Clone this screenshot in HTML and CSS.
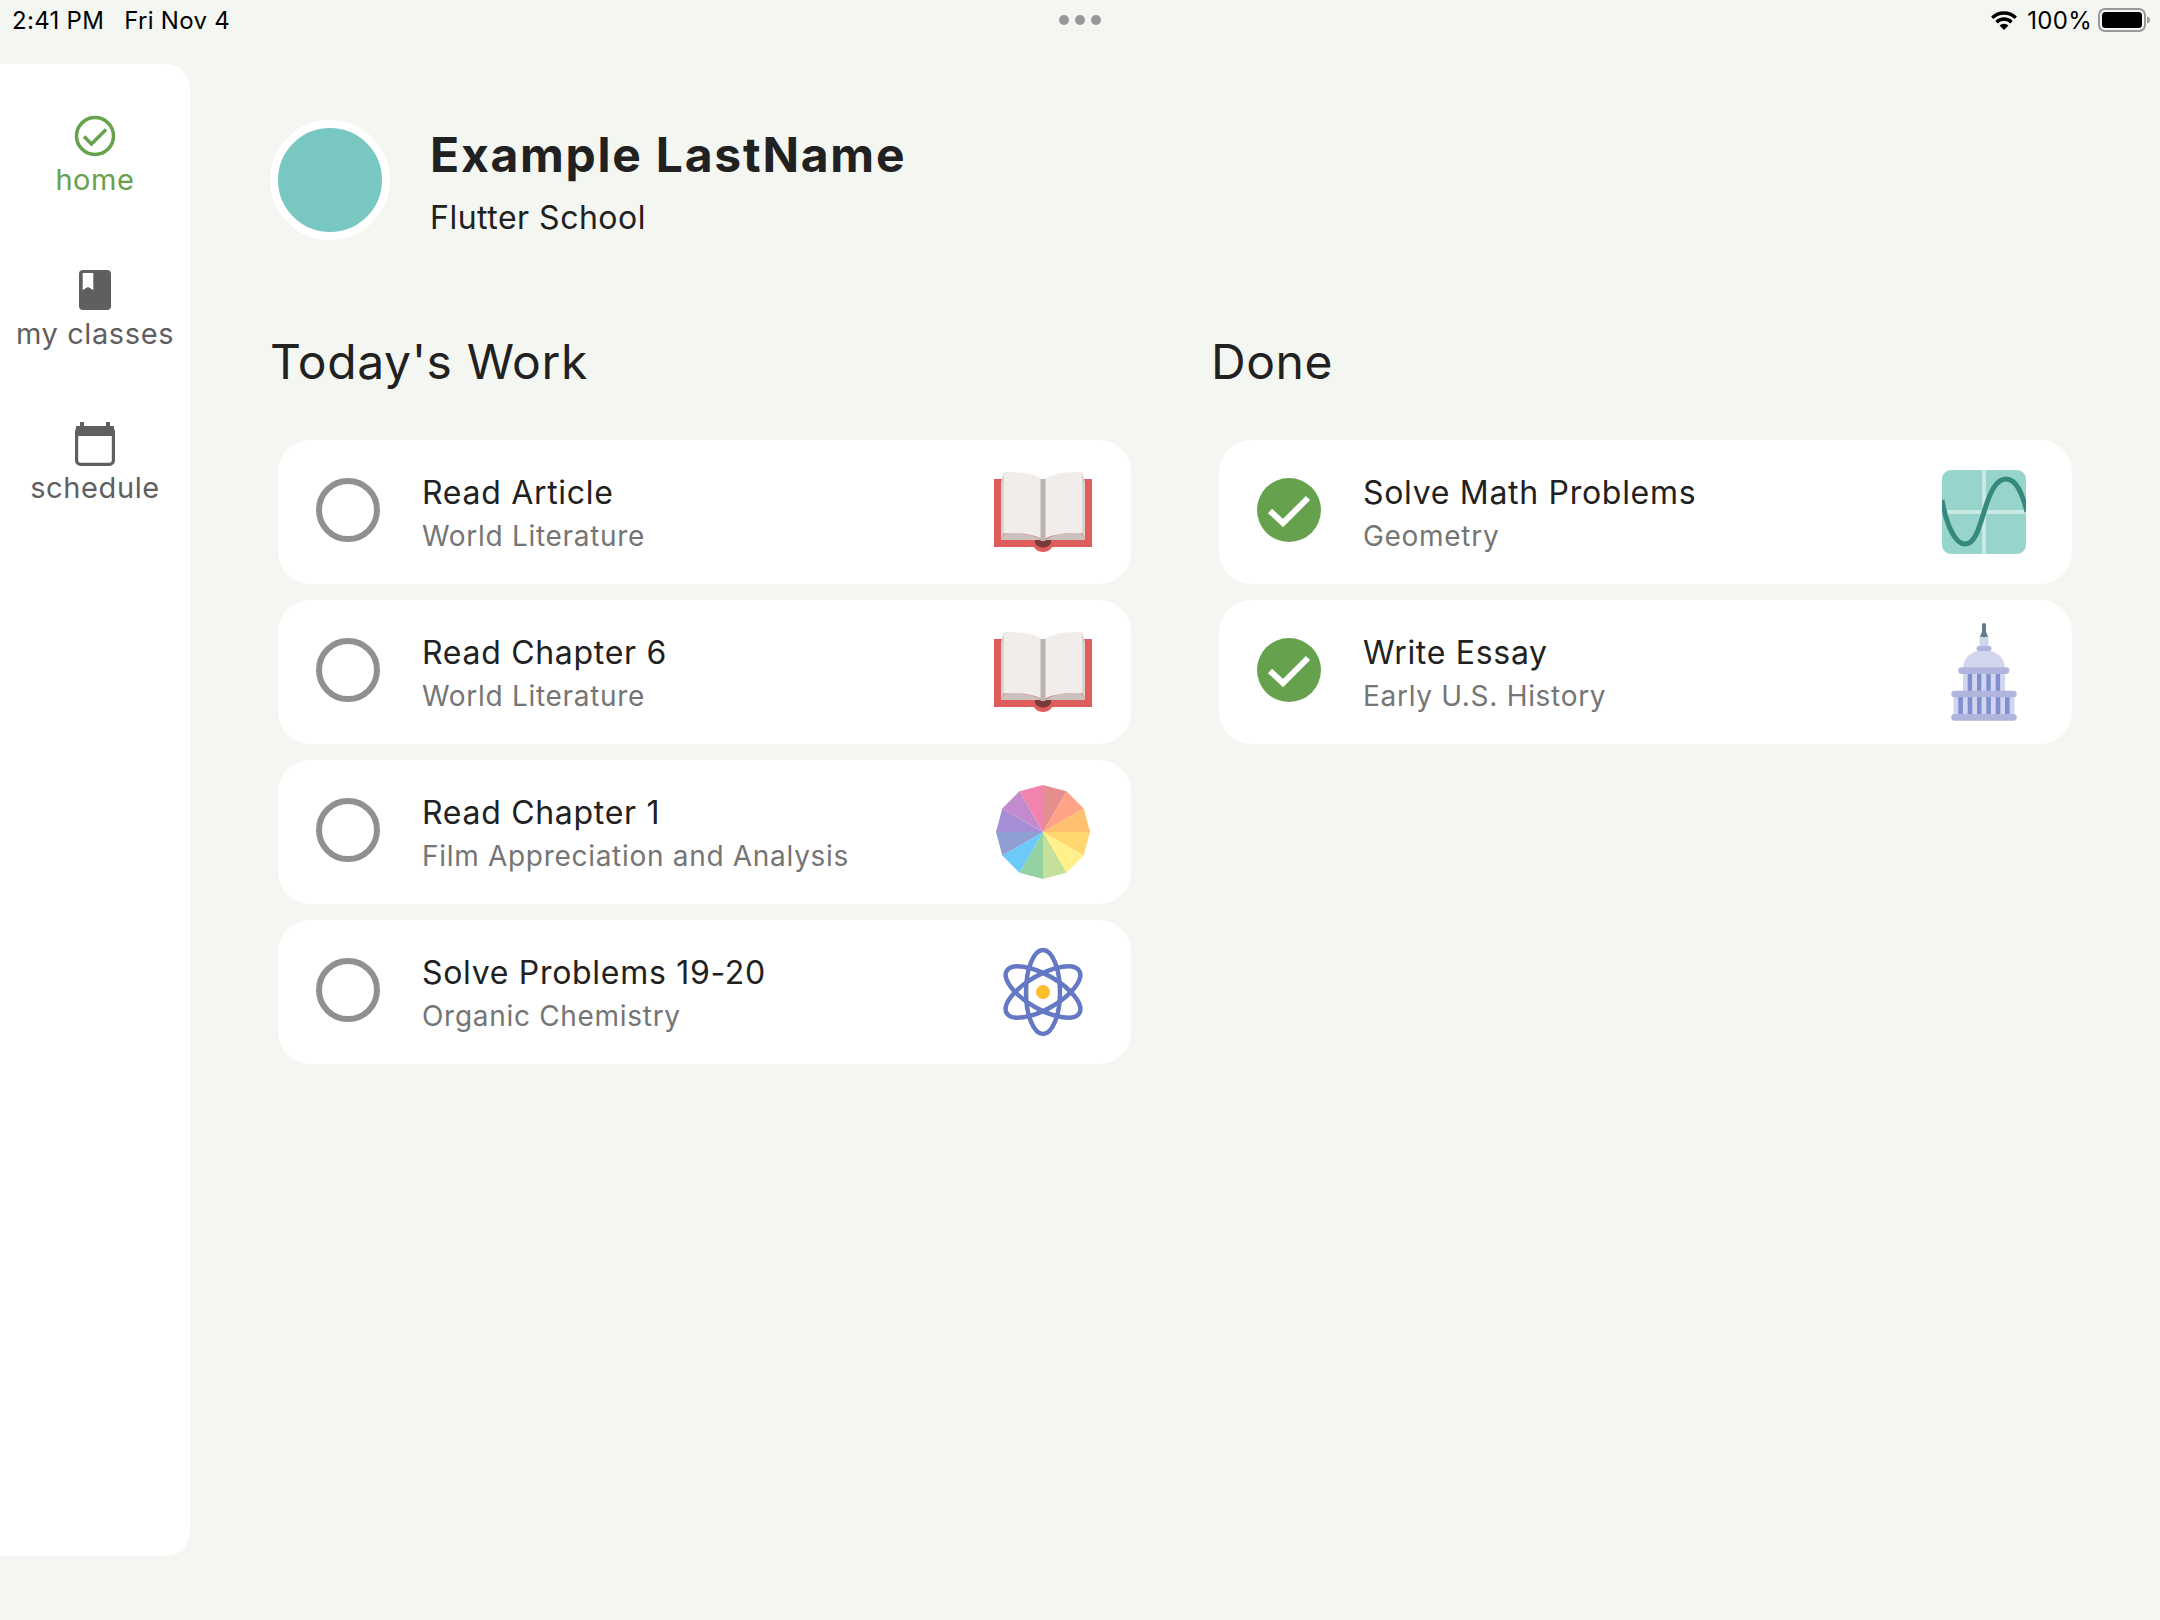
FILE: index.html
```html
<!DOCTYPE html>
<html lang="en">
<head>
    <meta charset="UTF-8">
    <meta name="viewport" content="width=device-width, initial-scale=1.0">
    <title>Flutter School</title>
    <link rel="stylesheet" href="styles.css">
</head>
<body>
    <svg class="defs" width="0" height="0">
        <symbol id="book" viewBox="0 0 100 100">
            <circle cx="50" cy="79" r="11" fill="#e05d5d"/>
            <rect x="1" y="17" width="98" height="68" fill="#e05d5d"/>
            <path d="M42 78h16v2c0 3-4 5.500-8 5.500s-8-2.500-8-5.500z" fill="#7a3a3a"/>
            <path d="M8 20l3-10v61l-3 6zM92 20l-3-10v61l3 6z" fill="#dad5d2"/>
            <path d="M8 77l4-6c16 0 29 1 36 7v0H8zM92 77l-4-6c-16 0-29 1-36 7v0h40z" fill="#cbc2bd"/>
            <path d="M11 10c16 0 30 1 37 7v60c-7-5-20-6-37-6zM89 10c-16 0-30 1-37 7v60c7-5 20-6 37-6z" fill="#f0edea"/>
            <rect x="47.500" y="17" width="5" height="62" fill="#bdb3ae"/>
        </symbol>
        <symbol id="done" viewBox="0 0 64 64">
            <circle cx="32" cy="32" r="32" fill="#66a14d"/>
            <path d="M13 33l13 12 25-25" fill="none" stroke="#fff" stroke-width="6"/>
        </symbol>
    </svg>

    <div class="status-bar">
        <div class="status-left"><span>2:41 PM</span><span>Fri Nov 4</span></div>
        <div class="status-dots"><i></i><i></i><i></i></div>
        <div class="status-right">
            <svg class="wifi" viewBox="0 0 26 20" width="26" height="20">
                <path d="M1.200 7.800a17 17 0 0 1 23.600 0" fill="none" stroke="#000" stroke-width="3.400"/>
                <path d="M5.500 12.200a10.500 10.500 0 0 1 15 0" fill="none" stroke="#000" stroke-width="3.400"/>
                <path d="M13 20l-4.500-4.500a6.500 6.500 0 0 1 9 0z" fill="#000"/>
            </svg>
            <span>100%</span>
            <svg class="battery" viewBox="0 0 52 24" width="52" height="24">
                <rect x="1" y="1" width="46" height="22" rx="6" fill="none" stroke="#999" stroke-width="2"/>
                <rect x="4" y="4" width="40" height="16" rx="3.500" fill="#000"/>
                <path d="M49 8.500c2 .5 3 2 3 3.500s-1 3-3 3.500z" fill="#999"/>
            </svg>
        </div>
    </div>

    <div class="layout">
        <nav class="sidebar">
            <a class="nav-item active">
                <svg viewBox="0 0 48 48" width="48" height="48">
                    <circle cx="24" cy="24" r="18.500" fill="none" stroke="#66a14d" stroke-width="3.500"/>
                    <path d="M13 24.500l7.500 7.500 14.500-14.500" fill="none" stroke="#66a14d" stroke-width="3.500"/>
                </svg>
                <span>home</span>
            </a>
            <a class="nav-item">
                <svg viewBox="0 0 48 48" width="48" height="48">
                    <rect x="8" y="4" width="32" height="40" rx="4" fill="#5f5f5f"/>
                    <path d="M11.700 7h10.600v17l-5.300-3-5.300 3z" fill="#fff"/>
                </svg>
                <span>my classes</span>
            </a>
            <a class="nav-item">
                <svg viewBox="0 0 48 48" width="48" height="48">
                    <rect x="9" y="2" width="4" height="6" fill="#5f5f5f"/>
                    <rect x="35" y="2" width="4" height="6" fill="#5f5f5f"/>
                    <rect x="5.600" y="7.600" width="36.800" height="36.800" rx="4" fill="none" stroke="#5f5f5f" stroke-width="3.200"/>
                    <rect x="5" y="6" width="38" height="10" fill="#5f5f5f"/>
                </svg>
                <span>schedule</span>
            </a>
        </nav>

        <main class="main">
            <header class="profile">
                <div class="avatar"></div>
                <div class="profile-text">
                    <h1>Example LastName</h1>
                    <p>Flutter School</p>
                </div>
            </header>

            <div class="columns">
                <section>
                    <h2>Today's Work</h2>
                    <ul class="task-list">
                        <li class="task">
                            <span class="radio"></span>
                            <div class="task-text"><strong>Read Article</strong><span>World Literature</span></div>
                            <svg class="task-icon" viewBox="0 0 100 100"><use href="#book"/></svg>
                        </li>
                        <li class="task">
                            <span class="radio"></span>
                            <div class="task-text"><strong>Read Chapter 6</strong><span>World Literature</span></div>
                            <svg class="task-icon" viewBox="0 0 100 100"><use href="#book"/></svg>
                        </li>
                        <li class="task">
                            <span class="radio"></span>
                            <div class="task-text"><strong>Read Chapter 1</strong><span>Film Appreciation and Analysis</span></div>
                            <svg class="task-icon" viewBox="0 0 100 100">
                                <path d="M50 50V3L73.500 9.300z" fill="#e58e8e"/>
                                <path d="M50 50L73.500 9.300 90.700 26.500z" fill="#ffa285"/>
                                <path d="M50 50L90.700 26.500 97 50z" fill="#ffbf6e"/>
                                <path d="M50 50H97L90.700 73.500z" fill="#ffd76f"/>
                                <path d="M50 50L90.700 73.500 73.500 90.700z" fill="#fff08a"/>
                                <path d="M50 50L73.500 90.700 50 97z" fill="#c5e09b"/>
                                <path d="M50 50V97L26.500 90.700z" fill="#94d1a0"/>
                                <path d="M50 50L26.500 90.700 9.300 73.500z" fill="#6dc9f7"/>
                                <path d="M50 50L9.300 73.500 3 50z" fill="#8f9fd4"/>
                                <path d="M50 50H3L9.300 26.500z" fill="#a68ed6"/>
                                <path d="M50 50L9.300 26.500 26.500 9.300z" fill="#c48ad0"/>
                                <path d="M50 50L26.500 9.300 50 3z" fill="#f283ae"/>
                            </svg>
                        </li>
                        <li class="task">
                            <span class="radio"></span>
                            <div class="task-text"><strong>Solve Problems 19-20</strong><span>Organic Chemistry</span></div>
                            <svg class="task-icon" viewBox="0 0 100 100">
                                <g fill="none" stroke="#6478c4" stroke-width="4.500">
                                    <ellipse cx="50" cy="50" rx="17" ry="42"/>
                                    <ellipse cx="50" cy="50" rx="17" ry="42" transform="rotate(60 50 50)"/>
                                    <ellipse cx="50" cy="50" rx="17" ry="42" transform="rotate(-60 50 50)"/>
                                </g>
                                <circle cx="50" cy="50" r="7" fill="#fdbd2d"/>
                            </svg>
                        </li>
                    </ul>
                </section>

                <section>
                    <h2>Done</h2>
                    <ul class="task-list">
                        <li class="task">
                            <svg class="check" viewBox="0 0 64 64"><use href="#done"/></svg>
                            <div class="task-text"><strong>Solve Math Problems</strong><span>Geometry</span></div>
                            <svg class="task-icon" viewBox="0 0 100 100">
                                <clipPath id="graph"><rect x="8" y="8" width="84" height="84" rx="9"/></clipPath>
                                <g clip-path="url(#graph)">
                                    <rect x="8" y="8" width="84" height="84" fill="#97d5cc"/>
                                    <path d="M50 8v84M8 50h84" stroke="#c9e9e3" stroke-width="4"/>
                                    <path d="M8 38C13 66 22 82 31 82C41 82 45 66 50 50C56 30 62 17 72 17C82 17 88 30 93 50" fill="none" stroke="#36897c" stroke-width="5"/>
                                </g>
                            </svg>
                        </li>
                        <li class="task">
                            <svg class="check" viewBox="0 0 64 64"><use href="#done"/></svg>
                            <div class="task-text"><strong>Write Essay</strong><span>Early U.S. History</span></div>
                            <svg class="task-icon" viewBox="0 0 100 100">
                                <path d="M48 3a2 2 0 0 1 4 0v7l2 5h-8l2-5z" fill="#607d8b"/>
                                <rect x="45.500" y="15" width="9" height="10" fill="#d1d5ee"/>
                                <path d="M29 46a21 18 0 0 1 42 0z" fill="#d1d5ee"/>
                                <rect x="29" y="52" width="42" height="17" fill="#d1d5ee"/>
                                <rect x="19.500" y="75" width="61" height="17" fill="#d1d5ee"/>
                                <path d="M33.700 52h4.400v17h-4.400zM43 52h4.400v17H43zM52.300 52h4.400v17h-4.400zM61.700 52h4.400v17h-4.400zM24.300 75h4.600v17h-4.600zM33.700 75h4.600v17h-4.600zM43 75h4.600v17H43zM52.300 75h4.600v17h-4.600zM61.700 75h4.600v17h-4.600zM71 75h4.600v17H71z" fill="#7f8fd0"/>
                                <g fill="#b0b5de">
                                    <rect x="42.500" y="24" width="15" height="5" rx="2.500"/>
                                    <rect x="24.300" y="45.300" width="51" height="6.700" rx="3.300"/>
                                    <rect x="17.300" y="68.700" width="65.400" height="6.600" rx="3.300"/>
                                    <rect x="17.300" y="92" width="65.400" height="6.700" rx="3.300"/>
                                </g>
                            </svg>
                        </li>
                    </ul>
                </section>
            </div>
        </main>
    </div>
</body>
</html>
```

FILE: styles.css
```css
* {
    box-sizing: border-box;
}
body {
    margin: 0;
    height: 1620px;
    overflow: hidden;
    background-color: #f4f6f1;
    color: #212121;
    font-family: Inter, "Open Sans", sans-serif;
}
.defs {
    display: block;
    height: 0;
}
.status-bar {
    display: grid;
    grid-template-columns: 1fr auto 1fr;
    align-items: center;
    height: 40px;
    padding: 0 10px;
    color: #000;
    font-size: 24px;
    letter-spacing: 0.3px;
    margin-bottom: 24px;
}
.status-left {
    display: flex;
    gap: 20px;
    padding-left: 2px;
}
.status-dots {
    display: flex;
    gap: 6px;
}
.status-dots i {
    width: 10px;
    height: 10px;
    border-radius: 50%;
    background-color: #999;
}
.status-right {
    display: flex;
    justify-content: flex-end;
    align-items: center;
    gap: 6px;
}
.wifi {
    margin-right: 4px;
}
.layout {
    display: flex;
}
.sidebar {
    flex: none;
    width: 190px;
    height: 1492px;
    padding-top: 48px;
    background-color: #fff;
    border-radius: 0 24px 24px 0;
}
.nav-item {
    display: flex;
    flex-direction: column;
    align-items: center;
    height: 154px;
    color: #5f5f5f;
    font-size: 29px;
    letter-spacing: 0.6px;
    line-height: 40px;
}
.nav-item.active {
    color: #66a14d;
}
.main {
    flex: 1;
    padding: 56px 80px 0;
}
.profile {
    display: flex;
    align-items: center;
    gap: 40px;
}
.avatar {
    width: 120px;
    height: 120px;
    border: 8px solid #fff;
    border-radius: 50%;
    background-color: #78c7c0;
}
.profile h1 {
    margin: 0;
    font-size: 48px;
    font-weight: 700;
    letter-spacing: 1.75px;
    line-height: 64px;
}
.profile p {
    margin: 11px 0 0;
    font-size: 32px;
    letter-spacing: 0.5px;
    line-height: 40px;
}
.columns {
    display: grid;
    grid-template-columns: 1fr 1fr;
    gap: 72px;
    margin-top: 92px;
}
.columns h2 {
    margin: 0 0 48px;
    font-size: 48px;
    font-weight: 400;
    letter-spacing: 0.6px;
    line-height: 60px;
}
.task-list {
    display: flex;
    flex-direction: column;
    gap: 16px;
    margin: 0;
    padding: 0 8px;
    list-style: none;
}
.task {
    display: flex;
    align-items: center;
    height: 144px;
    padding: 0 38px;
    background-color: #fff;
    border-radius: 32px;
}
.radio {
    flex: none;
    width: 64px;
    height: 64px;
    margin-top: -4px;
    border: 6px solid #909090;
    border-radius: 50%;
}
.check {
    flex: none;
    width: 64px;
    height: 64px;
    margin-top: -4px;
}
.task-text {
    display: flex;
    flex: 1;
    flex-direction: column;
    margin-left: 42px;
    padding-top: 5px;
}
.task-text strong {
    font-size: 32px;
    font-weight: 400;
    letter-spacing: 0.7px;
    line-height: 42px;
}
.task-text span {
    color: #757575;
    font-size: 28px;
    letter-spacing: 0.7px;
    line-height: 44px;
}
.task-icon {
    flex: none;
    width: 100px;
    height: 100px;
}
```
